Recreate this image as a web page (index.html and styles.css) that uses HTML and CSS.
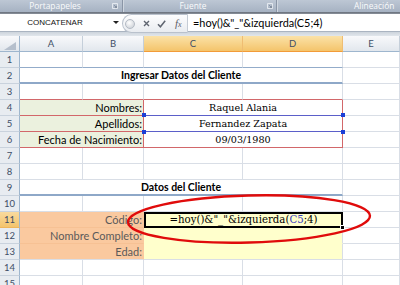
FILE: index.html
```html
<!DOCTYPE html>
<html>
<head>
<meta charset="utf-8">
<link rel="stylesheet" href="styles.css">
</head>
<body>
<div class="app">
  <div class="ribbon">
    <div class="group g1"><span class="glabel">Portapapeles</span><svg class="launcher" width="6" height="6" viewBox="0 0 6 6"><path d="M0.5 5.5V0.5H5.5V5.5Z" fill="none" stroke="#e4e9ef"/><path d="M2.2 2.2L4.6 4.6M4.6 2.8V4.6H2.8" fill="none" stroke="#7c8797" stroke-width="0.9"/></svg></div>
    <div class="gsep"></div>
    <div class="group g2"><span class="glabel">Fuente</span><svg class="launcher" width="6" height="6" viewBox="0 0 6 6"><path d="M0.5 5.5V0.5H5.5V5.5Z" fill="none" stroke="#e4e9ef"/><path d="M2.2 2.2L4.6 4.6M4.6 2.8V4.6H2.8" fill="none" stroke="#7c8797" stroke-width="0.9"/></svg></div>
    <div class="gsep"></div>
    <div class="group g3"><span class="glabel">Alineación</span></div>
  </div>
  <div class="ribbon-edge"></div>
  <div class="fbar">
    <div class="namebox">CONCATENAR</div>
    <div class="nb-drop"><span class="tri"></span></div>
    <div class="fbtns">
      <span class="grip"></span>
      <svg class="ico-x" width="7" height="7" viewBox="0 0 7 7"><path d="M1 1L6 6M6 1L1 6" stroke="#5f6570" stroke-width="1.4" fill="none"/></svg>
      <svg class="ico-ok" width="9" height="8" viewBox="0 0 9 8"><path d="M1 4.2L3.4 6.8L8.2 0.8" stroke="#5f6570" stroke-width="1.5" fill="none"/></svg>
      <span class="fx"><i>f</i><i class="fxs">x</i></span>
    </div>
    <div class="ftext">=hoy()&amp;"_"&amp;izquierda(C5;4)</div>
  </div>
  <div class="gap"></div>

  <div class="sheet">
    <div class="hc corner"><svg width="19" height="15" viewBox="0 0 19 15"><polygon points="4,14 16,14 16,6" fill="#b5bfcc"/></svg></div>
    <div class="hc">A</div><div class="hc">B</div><div class="hc sel">C</div><div class="hc sel">D</div><div class="hc">E</div>

    <div class="rh">1</div><div class="c bb"></div><div class="c bb"></div><div class="c bb"></div><div class="c bb"></div><div class="c"></div>
    <div class="rh">2</div><div class="c span4 title">Ingresar Datos del Cliente</div><div class="c"></div>
    <div class="rh">3</div><div class="c br"></div><div class="c br"></div><div class="c br"></div><div class="c br"></div><div class="c"></div>

    <div class="rh">4</div><div class="c span2 lbl green">Nombres:</div><div class="c span2 val vred bblue">Raquel Alania</div><div class="c"></div>
    <div class="rh">5</div><div class="c span2 lbl green">Apellidos:</div><div class="c span2 val vred bblue refbox">Fernandez Zapata<span class="hd tl"></span><span class="hd tr"></span><span class="hd bl"></span><span class="hd brr"></span></div><div class="c"></div>
    <div class="rh">6</div><div class="c span2 lbl green">Fecha de Nacimiento:</div><div class="c span2 val vred br">09/03/1980</div><div class="c"></div>

    <div class="rh">7</div><div class="c"></div><div class="c"></div><div class="c"></div><div class="c"></div><div class="c"></div>
    <div class="rh">8</div><div class="c"></div><div class="c"></div><div class="c"></div><div class="c"></div><div class="c"></div>
    <div class="rh">9</div><div class="c span4 title">Datos del Cliente</div><div class="c"></div>
    <div class="rh">10</div><div class="c"></div><div class="c"></div><div class="c"></div><div class="c"></div><div class="c"></div>

    <div class="rh sel">11</div><div class="c span2 lbl orange">Código:</div><div class="c span2 yellow active">=hoy()&amp;"_"&amp;izquierda(<span class="ref">C5</span>;4)<span class="fill-handle"></span></div><div class="c"></div>
    <div class="rh">12</div><div class="c span2 lbl orange">Nombre Completo:</div><div class="c span2 yellow"></div><div class="c"></div>
    <div class="rh">13</div><div class="c span2 lbl orange last">Edad:</div><div class="c span2 yellow last"></div><div class="c"></div>

    <div class="rh">14</div><div class="c"></div><div class="c"></div><div class="c"></div><div class="c"></div><div class="c"></div>
    <div class="rh">15</div><div class="c"></div><div class="c"></div><div class="c"></div><div class="c"></div><div class="c"></div>
  </div>

  <svg class="ring" width="400" height="285" viewBox="0 0 400 285"><ellipse cx="249" cy="219" rx="121" ry="23.5" transform="rotate(-1.5 249 219)" fill="none" stroke="#e00b0b" stroke-width="2.4"/></svg>
</div>
</body>
</html>
```

FILE: styles.css
```css
body {
  margin: 0;
  background: #fff;
  overflow: hidden;
}

.app {
  position: relative;
  width: 400px;
  height: 285px;
  overflow: hidden;
  font-family: Lato, "DejaVu Sans", sans-serif;
}

/* Ribbon group labels */
.ribbon {
  display: flex;
  height: 12px;
  background: linear-gradient(#bdc7d4, #a6b2c2);
  color: #fafbfc;
  font: 8.4px/12px "Open Sans", sans-serif;
  white-space: nowrap;
}

.group {
  display: flex;
  align-items: flex-start;
}

.g1 { padding-right: 4px; }
.g1 .glabel { width: 110px; text-align: center; }
.g2 { padding-right: 3px; }
.g2 .glabel { width: 138px; text-align: center; }
.g2 .launcher { margin-left: 5px; }
.g3 .glabel { padding-left: 76px; }

.launcher {
  margin-top: 3px;
  margin-left: 2px;
}

.gsep {
  width: 1px;
  background: #8a95a6;
  border-right: 1px solid #d0d7e0;
}

.ribbon-edge {
  height: 2px;
  background: linear-gradient(#666d78, #8d949e);
}

/* Formula bar */
.fbar {
  display: flex;
  height: 17px;
  background: #fff;
  align-items: center;
}

.namebox {
  width: 110px;
  text-align: center;
  font: 8px/17px "Liberation Sans", Arial, sans-serif;
  color: #111;
}

.nb-drop {
  width: 11px;
  display: flex;
  justify-content: center;
}

.tri {
  width: 0;
  height: 0;
  border-top: 3px solid #222;
  border-left: 3px solid transparent;
  border-right: 3px solid transparent;
}

.fbtns {
  margin-left: 1px;
  width: 66px;
  height: 19px;
  align-self: flex-start;
  box-sizing: border-box;
  border: 1px solid #b9c1cc;
  border-right-color: #c5ccd5;
  border-radius: 10px 0 0 10px;
  background: linear-gradient(#fdfdfe, #e9ecf0);
  display: flex;
  align-items: center;
}

.grip {
  margin-left: 2px;
  width: 10px;
  height: 10px;
  box-sizing: border-box;
  border-radius: 50%;
  border: 1px solid #b3bac4;
  background: radial-gradient(circle at 40% 35%, #ffffff, #c4c9d0);
}

.ico-x { margin-left: 8px; }
.ico-ok { margin-left: 7px; }

.fx {
  margin-left: 9px;
  font: 11px/1 "Liberation Serif", serif;
  color: #5d6068;
}

.fxs {
  font-size: 8px;
}

.ftext {
  padding-left: 5px;
  font: 10.9px/17px Lato, sans-serif;
  color: #000;
  white-space: nowrap;
}

.gap {
  height: 5px;
  box-sizing: border-box;
  border-top: 1px solid #aab4c1;
  background: linear-gradient(#cdd4dc, #e1e6ec);
}

/* Sheet */
.sheet {
  display: grid;
  grid-template-columns: 20px 63px 61px 99px 100px 57px;
  grid-auto-rows: 16px;
}

.hc {
  box-sizing: border-box;
  border-right: 1px solid #c5cfda;
  border-bottom: 1px solid #9eb6ce;
  background: linear-gradient(#f8f9fb, #e2e7ed);
  font: 9.5px/15px Lato, sans-serif;
  color: #3e4e66;
  text-align: center;
}

.hc.sel {
  background: linear-gradient(#fbe2a8, #f4c46b);
  border-bottom-color: #f29b38;
  border-right-color: #efbd72;
}

.corner {
  border-right-color: #9eb6ce;
}

.corner svg { display: block; }

.rh {
  box-sizing: border-box;
  border-right: 1px solid #9eb6ce;
  border-bottom: 1px solid #c9d2dd;
  background: #e8ecf1;
  font: 9.5px/15px Lato, sans-serif;
  color: #3e4e66;
  text-align: center;
}

.rh.sel {
  background: linear-gradient(#f9da9e, #f3c46d);
  border-bottom-color: #efb55a;
}

.c {
  box-sizing: border-box;
  border-right: 1px solid #d9dee6;
  border-bottom: 1px solid #d9dee6;
  font: 11px/15px Lato, sans-serif;
  color: #000;
  white-space: nowrap;
  overflow: hidden;
}

.span2 { grid-column: span 2; }
.span4 { grid-column: span 4; }

.bb { border-bottom-color: #93acca; }
.br { border-bottom-color: #d2676a; }

.title {
  font-size: 10.5px;
  font-weight: bold;
  text-align: center;
  border-bottom: 2px solid #8ea8c8;
  line-height: 14px;
}

.lbl {
  text-align: right;
  padding-right: 1px;
}

.green {
  background: #ebf1de;
  border-right-color: #d2676a;
  border-bottom-color: #d2676a;
}

.val {
  text-align: center;
  font: 9.6px/15px "DejaVu Serif", serif;
}

.vred { border-right-color: #d2676a; }
.bblue { border-bottom-color: #5b5fc9; }

.refbox { position: relative; overflow: visible; }

.hd {
  position: absolute;
  width: 4px;
  height: 4px;
  background: #1c3fd6;
}
.hd.tl { left: -2px; top: -3px; }
.hd.tr { right: -3px; top: -3px; }
.hd.bl { left: -2px; bottom: -3px; }
.hd.brr { right: -3px; bottom: -3px; }

.orange {
  background: #fac99f;
  border-right-color: #fac99f;
  border-bottom-color: #f6c194;
  color: #5a5a5a;
}

.orange.last { border-bottom-color: #d9dee6; }

.yellow {
  background: #ffffcc;
  border-bottom-color: #ffffcc;
}

.yellow.last { border-bottom-color: #d9dee6; }

.active {
  position: relative;
  overflow: visible;
  border: 2px solid #000;
  text-align: center;
  font: 10.2px/12px "DejaVu Serif", serif;
}

.ref { color: #3b3fbf; }

.fill-handle {
  position: absolute;
  right: -4px;
  bottom: -4px;
  width: 5px;
  height: 5px;
  box-sizing: border-box;
  background: #000;
  border: 1px solid #fff;
}

.ring {
  position: absolute;
  left: 0;
  top: 0;
  pointer-events: none;
}
```
